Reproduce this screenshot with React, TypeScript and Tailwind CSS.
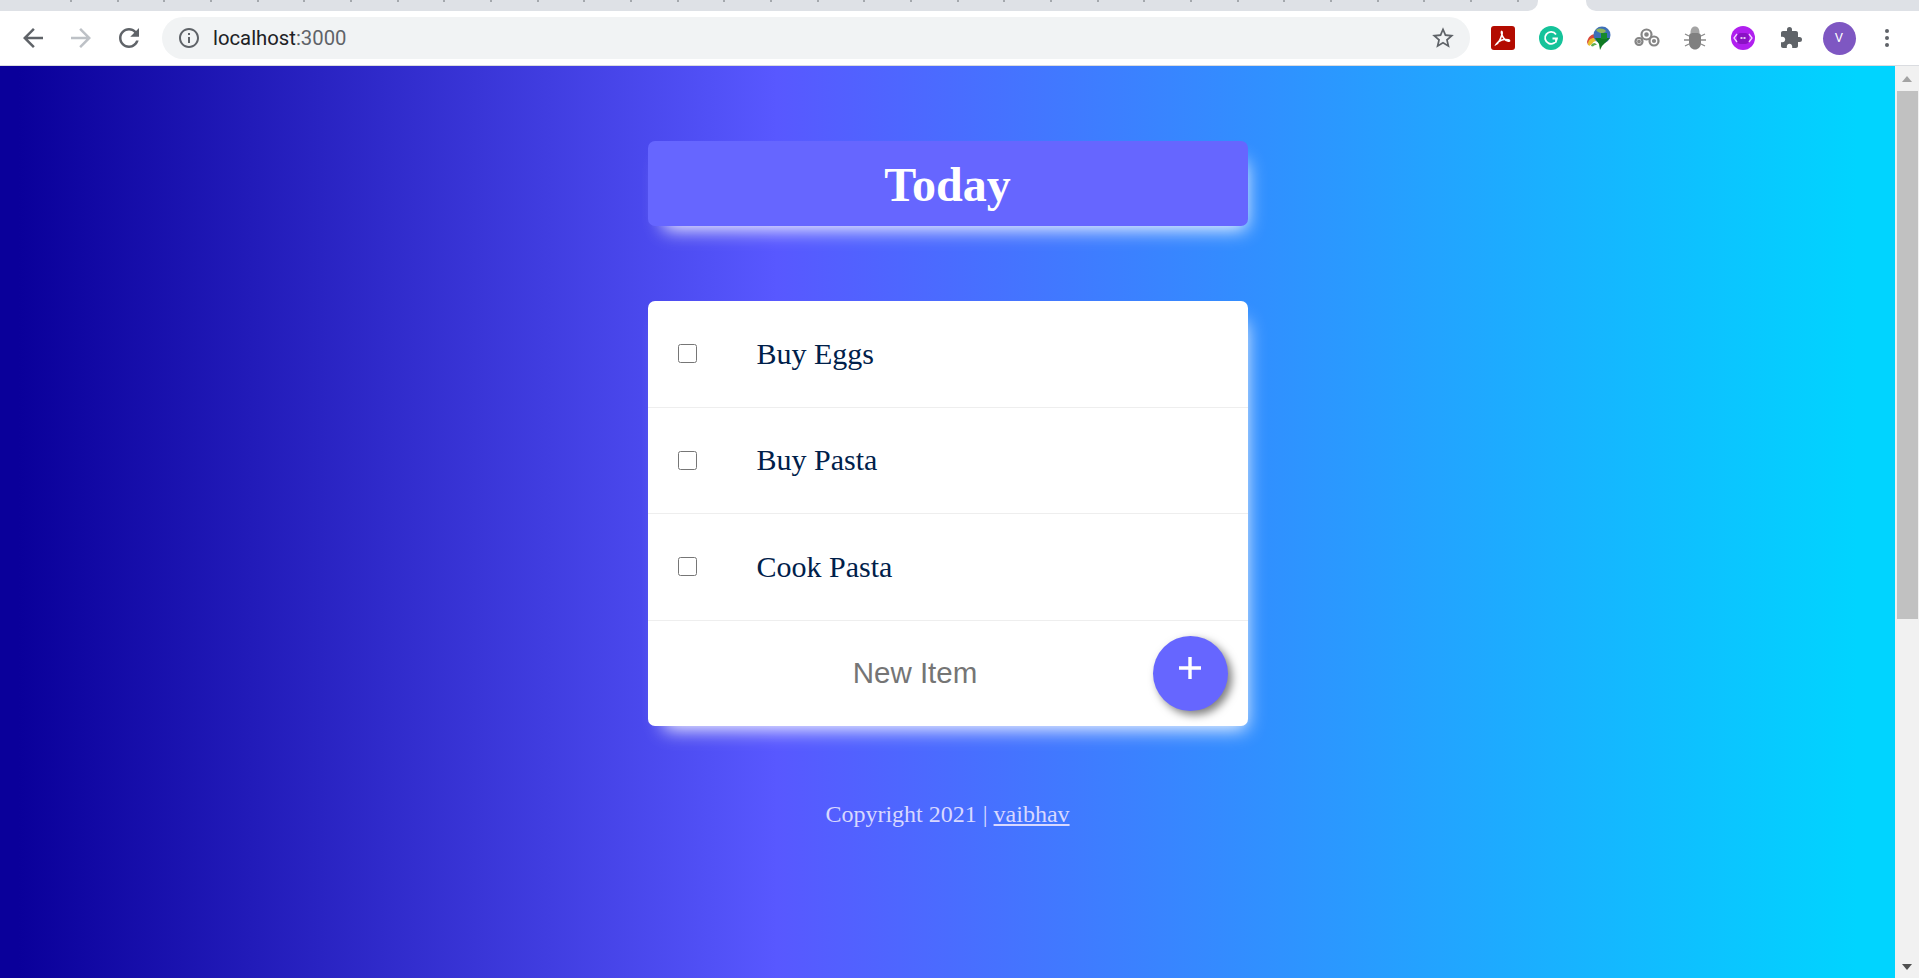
const tabTicks = Array.from({ length: 32 }, (_, i) => 70 + i * 46.67)
const items = [
  { text: 'Buy Eggs', height: 'h-[107px]' },
  { text: 'Buy Pasta', height: 'h-[106px]' },
  { text: 'Cook Pasta', height: 'h-[107px]' },
]

function TabStrip() {
  return (
    <div className="flex h-[11px] bg-white">
      <div className="relative w-[1538px] bg-[#dee1e6] rounded-br-[10px] overflow-hidden">
        {tabTicks.map((x) => (
          <span
            key={x}
            className="absolute top-0 w-[2px] h-[2px] bg-[#a4a8ad]"
            style={{ left: x }}
          />
        ))}
      </div>
      <div className="w-[48px]" />
      <div className="flex-1 bg-[#dee1e6] rounded-bl-[10px]" />
    </div>
  )
}

function Extensions() {
  return (
    <div className="flex items-center">
      <div className="w-12 flex justify-center">
        <div className="w-6 h-6 rounded-[3px] bg-[#b30b00] flex items-center justify-center">
          <svg width="18" height="18" viewBox="0 0 18 18" fill="none" stroke="#fff" strokeWidth="1.6">
            <path d="M2.5 15c2-1 4-5 5.500-9.500C8.500 3.500 8 2 7.500 2.500 7 3.500 8 7 10 9.500c1.500 2 4 3 5.500 2.500.5-1-2-1.800-5-1.500-3 .4-6 1.500-8 4.500Z" />
          </svg>
        </div>
      </div>
      <div className="w-12 flex justify-center">
        <div className="w-6 h-6 rounded-full bg-[#15c39a] flex items-center justify-center">
          <svg width="16" height="16" viewBox="0 0 16 16" fill="none" stroke="#fff" strokeWidth="1.8">
            <path d="M13 4.500A6 6 0 1 0 14 8.500H9.500M13 8.500V12.500" />
          </svg>
        </div>
      </div>
      <div className="w-12 flex justify-center">
        <svg width="24" height="24" viewBox="0 0 24 24">
          <path d="M0 16c1-5 4-8 9-8l3 4c-4 0-7 2-8 6l-3 1Z" fill="#d9473a" />
          <path d="M1 18c0-4 3-6 6-6l3 3c-3 0-4 1-5 3l-3 2Z" fill="#e8c22e" />
          <path d="M4 20c0-2 2-3 4-3l2 2c-2 0-3 0-4 1.500Z" fill="#5fae4b" />
          <circle cx="15" cy="9" r="8.500" fill="#3d6fb8" />
          <path d="M9 4c3-2 7-2 10 1-2 3-7 3-10-1Z" fill="#8fb45a" />
          <path d="M8 12h15l-8 8-2 4-1-6Z" fill="#0f7a22" />
          <path d="M14 7h6v6h-6Z" fill="#168a2b" />
        </svg>
      </div>
      <div className="w-12 flex justify-center">
        <svg width="26" height="24" viewBox="0 0 26 24" fill="none" stroke="#858585" strokeWidth="2.200">
          <circle cx="12.500" cy="8.500" r="5" />
          <circle cx="5" cy="15.500" r="3.500" />
          <circle cx="20" cy="15" r="4.500" />
          <circle cx="20" cy="15" r="1" fill="#858585" />
          <circle cx="5" cy="15.500" r="0.800" fill="#858585" />
          <circle cx="12.500" cy="8.500" r="1.200" fill="#858585" />
        </svg>
      </div>
      <div className="w-12 flex justify-center">
        <svg width="24" height="24" viewBox="0 0 24 24" fill="#808080">
          <path d="M7.500 7C7.500 3 9 .5 12 .5S16.500 3 16.500 7Z" fill="#a4a4a4" />
          <path d="M6 10c0-1.500 1-3 3-3h6c2 0 3 1.500 3 3v7c0 4-3 6.500-6 6.500S6 21 6 17Z" />
          <path d="M2 8l4 2M1 14h5M2 20l4-2M22 8l-4 2M23 14h-5M22 20l-4-2" stroke="#8a8a8a" strokeWidth="1.300" />
        </svg>
      </div>
      <div className="w-12 flex justify-center">
        <svg width="24" height="24" viewBox="0 0 24 24" fill="none">
          <circle cx="12" cy="12" r="12" fill="#b01fef" />
          <rect x="6" y="7" width="12" height="11" rx="4" fill="#8a12c4" />
          <path d="M6 8l-3 4 3 4M18 8l3 4-3 4" stroke="#f3d8ff" strokeWidth="1.300" />
          <path d="M9.500 12h2M12.500 12h2" stroke="#fff" strokeWidth="1.600" />
        </svg>
      </div>
      <div className="w-12 flex justify-center">
        <svg width="24" height="24" viewBox="0 0 24 24" fill="#5f6368">
          <path d="M20.500 11H19V7c0-1.100-.9-2-2-2h-4V3.500a2.500 2.500 0 0 0-5 0V5H4c-1.100 0-2 .9-2 2v3.800h1.500c1.500 0 2.700 1.200 2.700 2.700S5 16.200 3.500 16.200H2V20c0 1.100.9 2 2 2h3.800v-1.500c0-1.500 1.200-2.700 2.700-2.700s2.700 1.200 2.700 2.700V22H17c1.100 0 2-.9 2-2v-4h1.500a2.500 2.500 0 0 0 0-5z" />
        </svg>
      </div>
      <div className="w-12 flex justify-center">
        <div className="w-[33px] h-[33px] rounded-full bg-[#7e57c2] text-white text-[13px] flex items-center justify-center font-['Roboto',sans-serif]">
          V
        </div>
      </div>
      <div className="w-12 flex flex-col items-center gap-[3px]">
        <span className="w-1 h-1 rounded-full bg-[#5f6368]" />
        <span className="w-1 h-1 rounded-full bg-[#5f6368]" />
        <span className="w-1 h-1 rounded-full bg-[#5f6368]" />
      </div>
    </div>
  )
}

function Toolbar() {
  return (
    <div className="flex items-center h-[55px] bg-white border-b border-[#dadce0] pl-[9px]">
      <div className="w-[48px] flex justify-center">
        <svg width="30" height="30" viewBox="0 0 24 24" fill="#5f6368">
          <path d="M20 11H7.830l5.590-5.590L12 4l-8 8 8 8 1.410-1.410L7.830 13H20v-2z" />
        </svg>
      </div>
      <div className="w-[48px] flex justify-center">
        <svg width="30" height="30" viewBox="0 0 24 24" fill="#bdc1c6">
          <path d="M4 11h12.170l-5.590-5.590L12 4l8 8-8 8-1.410-1.410L16.170 13H4v-2z" />
        </svg>
      </div>
      <div className="w-[48px] flex justify-center">
        <svg width="30" height="30" viewBox="0 0 24 24" fill="#5f6368">
          <path d="M17.650 6.350C16.200 4.900 14.210 4 12 4c-4.420 0-7.990 3.580-7.990 8s3.570 8 7.990 8c3.730 0 6.840-2.550 7.730-6h-2.080c-.82 2.330-3.040 4-5.650 4-3.310 0-6-2.690-6-6s2.690-6 6-6c1.660 0 3.140.69 4.220 1.780L13 11h7V4l-2.350 2.350z" />
        </svg>
      </div>
      <div className="ml-[9px] flex items-center w-[1308px] h-[42px] rounded-full bg-[#f1f3f4] pl-[15px] pr-[14px]">
        <svg width="24" height="24" viewBox="0 0 24 24" fill="#5f6368">
          <path d="M11 7h2v2h-2zm0 4h2v6h-2zm1-9C6.480 2 2 6.480 2 12s4.480 10 10 10 10-4.480 10-10S17.520 2 12 2zm0 18c-4.410 0-8-3.590-8-8s3.590-8 8-8 8 3.590 8 8-3.590 8-8 8z" />
        </svg>
        <span className="ml-[12px] font-['Roboto',sans-serif] text-[20.3px] text-[#202124]">
          localhost<span className="text-[#5f6368]">:3000</span>
        </span>
        <svg width="26" height="26" viewBox="0 0 24 24" fill="#5f6368" className="ml-auto">
          <path d="M22 9.240l-7.190-.62L12 2 9.190 8.630 2 9.240l5.460 4.730L5.820 21 12 17.270 18.180 21l-1.630-7.030L22 9.240zM12 15.400l-3.760 2.270 1-4.280-3.320-2.880 4.380-.38L12 6.100l1.710 4.040 4.380.38-3.320 2.880 1 4.280L12 15.400z" />
        </svg>
      </div>
      <div className="ml-[9px]">
        <Extensions />
      </div>
    </div>
  )
}

function Scrollbar() {
  return (
    <div className="flex flex-col w-6 bg-[#f1f1f1]">
      <div className="h-[25px] flex items-center justify-center">
        <span className="w-0 h-0 border-x-[5px] border-x-transparent border-b-[6px] border-b-[#a3a3a3]" />
      </div>
      <div className="ml-[2px] w-[21px] h-[528px] bg-[#c1c1c1]" />
      <div className="mt-auto h-[22px] flex items-center justify-center">
        <span className="w-0 h-0 border-x-[5px] border-x-transparent border-t-[6px] border-t-[#505050]" />
      </div>
    </div>
  )
}

function TodoRow({ text, height }: { text: string; height: string }) {
  return (
    <div className={`flex items-center ${height} border-b border-[#eeeeee] pl-[30px] pb-[1px]`}>
      <input type="checkbox" className="w-[19px] h-[19px] m-0" />
      <span className="ml-[60px] pb-[1px] text-[30px] text-[#00204a]">{text}</span>
    </div>
  )
}

export default function App() {
  return (
    <div className="flex flex-col h-screen overflow-hidden">
      <TabStrip />
      <Toolbar />
      <div className="flex flex-1 min-h-0">
        <main className="flex-1 flex flex-col items-center pt-[75px] bg-[linear-gradient(to_right,#0a009a_1%,#5858ff_41%,#00d4ff_98%)] font-['Liberation_Serif',serif]">
          <div className="w-[600px]">
            <div className="h-[85px] pt-[2px] flex items-center justify-center rounded-[7px] bg-[#6666ff] shadow-[7px_12px_18px_-9px_#ffffff]">
              <h1 className="text-[48px] font-bold text-white">Today</h1>
            </div>
            <div className="mt-[75px] rounded-[7px] bg-white shadow-[7px_12px_18px_-9px_#ffffff]">
              {items.map((item) => (
                <TodoRow key={item.text} text={item.text} height={item.height} />
              ))}
              <div className="flex items-center h-[105px] pl-[30px] pr-5">
                <input
                  placeholder="New Item"
                  className="flex-1 min-w-0 text-center text-[29.5px] font-['Liberation_Sans',sans-serif] outline-none placeholder:text-[#757575]"
                />
                <button className="flex items-center justify-center w-[75px] h-[75px] pb-[11px] rounded-full bg-[#6666ff] shadow-[4px_4px_8px_#00000080]">
                  <svg width="22" height="22" viewBox="0 0 22 22" fill="#ffffff">
                    <path d="M9.300 0h3.400v9.300H22v3.400h-9.300V22H9.300v-9.300H0V9.300h9.300z" />
                  </svg>
                </button>
              </div>
            </div>
            <p className="mt-[70px] text-center text-[24px] text-[#d8d8ff]">
              Copyright 2021 | <a href="#" className="underline">vaibhav</a>
            </p>
          </div>
        </main>
        <Scrollbar />
      </div>
    </div>
  )
}
